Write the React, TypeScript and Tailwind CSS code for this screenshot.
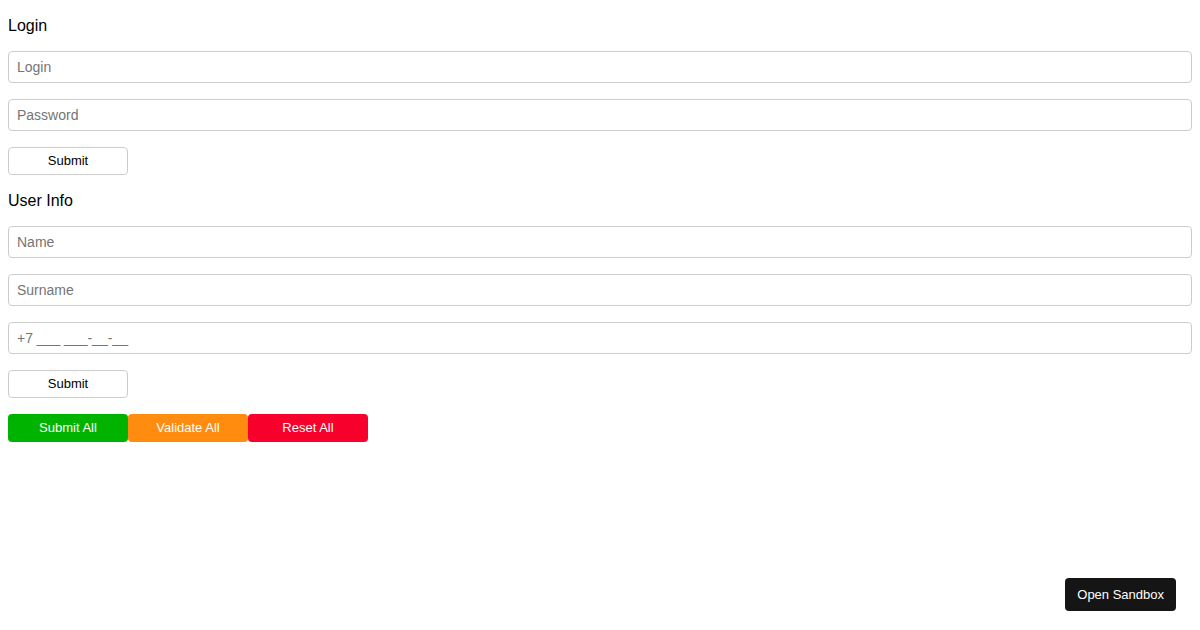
const font = { fontFamily: '"Liberation Sans", Arial, sans-serif' };

function Field({ placeholder }: { placeholder: string }) {
  return (
    <input
      placeholder={placeholder}
      className="h-8 w-full rounded border border-[#cccccc] bg-white px-2 text-sm text-black outline-none placeholder:text-[#757575]"
    />
  );
}

function SubmitButton({ label }: { label: string }) {
  return (
    <button className="h-7 w-[120px] rounded border border-[#cccccc] bg-white text-[13px] text-black">
      {label}
    </button>
  );
}

export default function App() {
  return (
    <div className="min-h-screen bg-white" style={font}>
      <div className="flex flex-col gap-4 px-2 pt-4">
        <h2 className="text-base leading-[19px] text-black">Login</h2>
        <Field placeholder="Login" />
        <Field placeholder="Password" />
        <div>
          <SubmitButton label="Submit" />
        </div>
        <h2 className="text-base leading-[19px] text-black">User Info</h2>
        <Field placeholder="Name" />
        <Field placeholder="Surname" />
        <Field placeholder="+7 ___ ___-__-__" />
        <div>
          <SubmitButton label="Submit" />
        </div>
        <div className="flex">
          <button className="h-7 w-[120px] rounded bg-[#00b300] text-[13px] text-white">Submit All</button>
          <button className="h-7 w-[120px] rounded bg-[#ff8b0f] text-[13px] text-white">Validate All</button>
          <button className="h-7 w-[120px] rounded bg-[#f7002c] text-[13px] text-white">Reset All</button>
        </div>
      </div>
      <button className="fixed right-6 bottom-[19px] h-[33px] rounded bg-[#151515] px-3 text-[13px] text-white">
        Open Sandbox
      </button>
    </div>
  );
}
